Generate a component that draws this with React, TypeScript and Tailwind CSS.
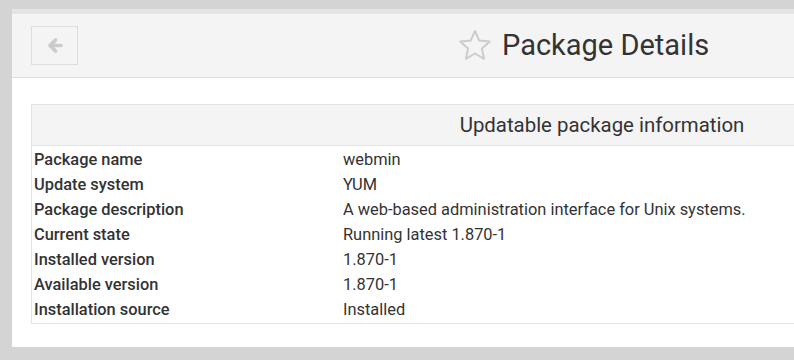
const rows: [string, string][] = [
  ["Package name", "webmin"],
  ["Update system", "YUM"],
  ["Package description", "A web-based administration interface for Unix systems."],
  ["Current state", "Running latest 1.870-1"],
  ["Installed version", "1.870-1"],
  ["Available version", "1.870-1"],
  ["Installation source", "Installed"],
];

export default function App() {
  return (
    <div className="h-[360px] w-full overflow-hidden bg-[#d4d4d4] pl-[12px] pt-[9px] font-['Roboto',sans-serif] text-[#333]">
      <div className="w-[1180px] border-t-[5px] border-[#e4e4e4] bg-white pb-[23px]">
        {/* header bar */}
        <div className="flex h-[64px] items-center border-b border-[#dcdcdc] bg-[#f4f4f4] px-[19px]">
          <button className="flex h-[39px] w-[47px] items-center justify-center border border-[#dddddd] bg-[#f4f4f4]">
            <svg width="16" height="15" viewBox="0 0 16 15">
              <path
                d="M8.5 2 L3 7.5 L8.5 13 M3.5 7.5 H14"
                fill="none"
                stroke="#cbcbcb"
                strokeWidth="3.6"
                strokeLinecap="round"
                strokeLinejoin="round"
              />
            </svg>
          </button>
          <div className="ml-[380px] flex items-center gap-[10px]">
            <svg width="34" height="32" viewBox="0 0 34 32" className="-mt-[2px]">
              <polygon
                points="17,2 21.3,11.6 31.7,12.6 23.9,19.6 26.1,29.8 17,24.5 7.9,29.8 10.1,19.6 2.3,12.6 12.7,11.6"
                fill="none"
                stroke="#cccccc"
                strokeWidth="2"
                strokeLinejoin="round"
              />
            </svg>
            <h1 className="text-[29px] leading-none font-normal text-[#333]">Package Details</h1>
          </div>
        </div>

        {/* details table */}
        <div className="mx-[19px] mt-[26px] border border-[#e4e4e4]">
          <div className="h-[41px] border-b border-[#e4e4e4] bg-[#f4f4f4] text-center text-[20.4px] leading-[41px]">
            Updatable package information
          </div>
          <div className="pt-[2px]">
            {rows.map(([label, value]) => (
              <div key={label} className="flex h-[25px] items-center text-[16.4px]">
                <div className="w-[311px] pl-[2px] font-medium">{label}</div>
                <div>{value}</div>
              </div>
            ))}
          </div>
        </div>
      </div>
    </div>
  );
}
